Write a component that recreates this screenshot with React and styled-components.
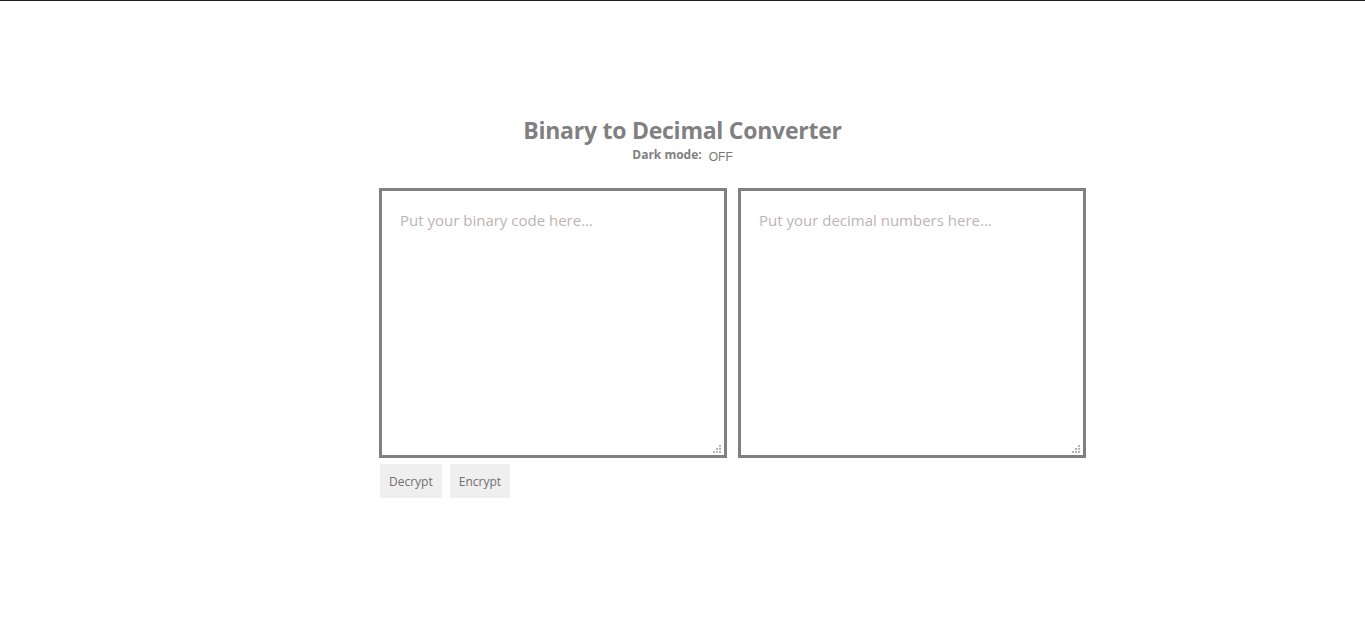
import React from "react"
import styled, { createGlobalStyle } from "styled-components"

const GlobalStyle = createGlobalStyle`
  html, body {
    margin: 0;
    padding: 0;
    background: #fff;
  }
  body {
    border-top: 1px solid #1e1e1e;
    font-family: "Open Sans", "Noto Sans", sans-serif;
    color: #808080;
  }
`

const Page = styled.div`
  padding-top: 114px;
`

const Header = styled.header`
  text-align: center;
  .title {
    margin: 0;
    font-size: 23px;
    font-weight: 700;
    line-height: 30px;
    letter-spacing: -0.25px;
  }
  .mode {
    display: flex;
    justify-content: center;
    align-items: baseline;
    gap: 7px;
    margin-top: 1px;
  }
  .label {
    font-size: 12px;
    font-weight: 700;
  }
  .toggle {
    border: none;
    background: none;
    padding: 0;
    font-family: "Liberation Sans", Arial, sans-serif;
    font-size: 12px;
    color: #777;
    position: relative;
    top: 2px;
    cursor: pointer;
  }
`

const Main = styled.main`
  width: 607px;
  margin: 25px auto 0;
`

const Boxes = styled.div`
  display: flex;
  gap: 11.5px;
`

const Field = styled.div`
  position: relative;
  flex: none;
  width: 347.5px;
  height: 270px;
`

const Area = styled.textarea`
  display: block;
  box-sizing: border-box;
  width: 100%;
  height: 100%;
  border: 3px solid #808080;
  padding: 19px 18px;
  margin: 0;
  font-family: "Open Sans", "Noto Sans", sans-serif;
  font-size: 15px;
  line-height: 20px;
  color: #666;
  outline: none;
  resize: none;
  &::placeholder {
    color: #bcb4b4;
  }
`

const Grip = styled.svg`
  position: absolute;
  right: 6px;
  bottom: 5px;
  width: 8px;
  height: 8px;
  pointer-events: none;
`

const Actions = styled.div`
  display: flex;
  gap: 8px;
  margin-top: 6px;
  padding-left: 1px;
`

const Button = styled.button`
  height: 34px;
  padding: 0 9px;
  border: none;
  background: #efefef;
  color: #707070;
  font-family: "Open Sans", "Noto Sans", sans-serif;
  font-size: 12px;
  cursor: pointer;
`

const ResizeGrip = () => (
  <Grip viewBox="0 0 8 8">
    <g fill="#b4b4b4">
      <rect x="6" y="0" width="2" height="2" />
      <rect x="3" y="3" width="2" height="2" />
      <rect x="6" y="3" width="2" height="2" />
      <rect x="0" y="6" width="2" height="2" />
      <rect x="3" y="6" width="2" height="2" />
      <rect x="6" y="6" width="2" height="2" />
    </g>
  </Grip>
)

const TextBox = ({ placeholder }) => (
  <Field>
    <Area placeholder={placeholder} />
    <ResizeGrip />
  </Field>
)

export default function App() {
  return (
    <Page>
      <GlobalStyle />
      <Header>
        <h1 className="title">Binary to Decimal Converter</h1>
        <div className="mode">
          <span className="label">Dark mode:</span>
          <button className="toggle">OFF</button>
        </div>
      </Header>
      <Main>
        <Boxes>
          <TextBox placeholder="Put your binary code here..." />
          <TextBox placeholder="Put your decimal numbers here..." />
        </Boxes>
        <Actions>
          <Button>Decrypt</Button>
          <Button>Encrypt</Button>
        </Actions>
      </Main>
    </Page>
  )
}
